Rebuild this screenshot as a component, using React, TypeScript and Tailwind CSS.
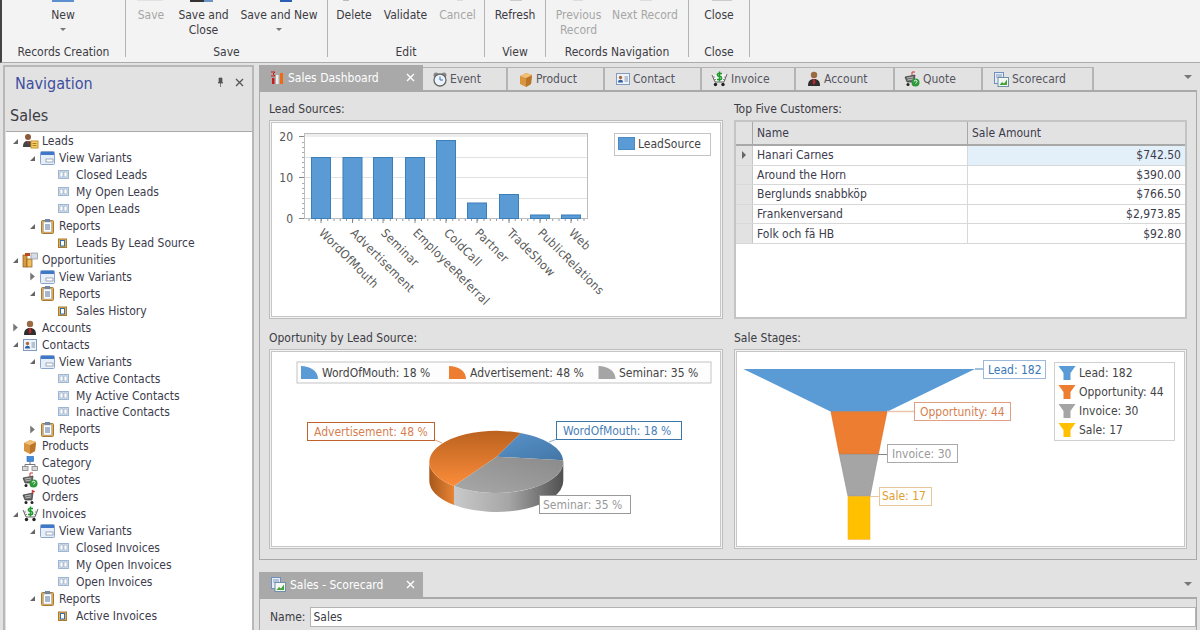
import type { ReactNode } from "react";

const FONT = "font-['DejaVu_Sans_Condensed','DejaVu_Sans',sans-serif]";

function Caret({ open }: { open: boolean }) {
  return (
    <svg width="7" height="9" viewBox="0 0 7 9" className="shrink-0">
      {open ? <path d="M6 2v5H1z" fill="#666" /> : <path d="M1.5 1l4 3.5-4 3.5z" fill="#777" stroke="#777" strokeWidth=".5" />}
    </svg>
  );
}

function LeadIcon() {
  return (
    <svg width="17" height="16" viewBox="0 0 17 16">
      <circle cx="6" cy="4" r="3" fill="#8a5a3a" />
      <path d="M1 14c0-5 2-6 5-6s5 1 5 6z" fill="#444" />
      <path d="M5 8h2l-1 4z" fill="#c33" />
      <rect x="9" y="8" width="7" height="7" fill="#f5cf6a" stroke="#c8922c" />
      <path d="M10.500 10.500h4M10.500 12.500h4" stroke="#b07a20" />
    </svg>
  );
}

function ViewIcon() {
  return (
    <svg width="15" height="14" viewBox="0 0 15 14">
      <rect x=".5" y=".5" width="14" height="13" rx="1" fill="#e8eef7" stroke="#8aa6cc" />
      <rect x="1" y="1" width="13" height="3" fill="#3f78c8" />
      <rect x="6" y="8" width="7" height="3" fill="#fff" stroke="#7b8ba3" strokeWidth=".7" />
    </svg>
  );
}

function VariantIcon() {
  return (
    <svg width="11" height="10" viewBox="0 0 11 10">
      <rect x=".5" y=".5" width="10" height="8" fill="#dbe6f3" stroke="#9db6d2" />
      <rect x="2" y="2" width="3" height="5" fill="#fff" stroke="#8aa0bb" strokeWidth=".6" />
      <rect x="6" y="2" width="3" height="5" fill="#fff" stroke="#8aa0bb" strokeWidth=".6" />
    </svg>
  );
}

function ReportIcon() {
  return (
    <svg width="13" height="15" viewBox="0 0 13 15">
      <rect x=".5" y="1.500" width="12" height="13" rx="1" fill="#e0aa55" stroke="#a87a30" />
      <rect x="2.500" y="3" width="8" height="10" fill="#fff" stroke="#8aa0bb" strokeWidth=".5" />
      <rect x="4" y="0" width="5" height="3" fill="#6b87ad" />
      <path d="M4 6h5M4 8h5M4 10h5" stroke="#4f6f9c" />
    </svg>
  );
}

function ReportItemIcon() {
  return (
    <svg width="9" height="10" viewBox="0 0 9 10">
      <rect x=".5" y="1" width="8" height="8.500" fill="#e6b04e" stroke="#a97c2e" />
      <rect x="2.500" y="2.500" width="4" height="5.500" fill="#fff" stroke="#2f6fb8" />
    </svg>
  );
}

function OppIcon() {
  return (
    <svg width="16" height="16" viewBox="0 0 16 16">
      <rect x="1" y="3" width="4" height="12" fill="#d89a3c" stroke="#8a5a1a" strokeWidth=".7" />
      <rect x="5" y="7" width="5" height="8" fill="#efbe5c" stroke="#8a5a1a" strokeWidth=".7" />
      <rect x="9" y="1" width="6.500" height="6" fill="#d6dce6" stroke="#8a8f99" strokeWidth=".7" />
      <rect x="3" y="1" width="5" height="3" fill="#bb4a20" />
    </svg>
  );
}

function AccountIcon() {
  return (
    <svg width="14" height="16" viewBox="0 0 14 16">
      <circle cx="7" cy="4" r="3.200" fill="#9a6a44" />
      <path d="M1 15c0-5 2-7 6-7s6 2 6 7z" fill="#2e2e2e" />
      <path d="M6 8h2l.5 4-1.500 2-1.500-2z" fill="#b52a2a" />
    </svg>
  );
}

function ContactIcon() {
  return (
    <svg width="14" height="12" viewBox="0 0 14 12">
      <rect x=".5" y=".5" width="13" height="11" fill="#eef3fa" stroke="#7f9bc2" />
      <circle cx="4.500" cy="4.500" r="1.700" fill="#a86a3c" />
      <path d="M2 9.500c0-2 1-2.700 2.500-2.700S7 7.500 7 9.500z" fill="#2f5f9f" />
      <path d="M8.500 4h3.500M8.500 6h3.500M8.500 8h3.500" stroke="#7f8fa8" />
    </svg>
  );
}

function ProductIcon() {
  return (
    <svg width="14" height="15" viewBox="0 0 14 15">
      <path d="M1 4l6-3 6 2-1 9-5 3-6-3z" fill="#d8953f" />
      <path d="M7 6l6-3-1 9-5 3z" fill="#b9762a" />
      <path d="M1 4l6-3 6 2-6 3z" fill="#f0c07a" />
    </svg>
  );
}

function CategoryIcon() {
  return (
    <svg width="16" height="15" viewBox="0 0 16 15">
      <rect x="5" y=".5" width="6.500" height="5" fill="#3f8ce0" stroke="#2a5fa5" strokeWidth=".6" />
      <path d="M8 5.500v3M3 11V8.500h10V11" stroke="#777" fill="none" />
      <rect x=".5" y="10.500" width="5.500" height="4" fill="#d8d8d8" stroke="#777" strokeWidth=".7" />
      <rect x="10" y="10.500" width="5.500" height="4" fill="#d8d8d8" stroke="#777" strokeWidth=".7" />
    </svg>
  );
}

function CartIcon({ badge }: { badge: "quote" | "order" | "invoice" }) {
  if (badge === "invoice") {
    return (
      <svg width="17" height="16" viewBox="0 0 17 16">
        <path d="M1 4l3 7h9l3-8" fill="#f4f4f4" stroke="#444" strokeWidth=".8" />
        <path d="M2 6h2M13 6h2M3 8.500h2M12 8.500h2" stroke="#666" strokeWidth=".7" />
        <path d="M6 8.500h3.500c1.500 0 1.500-2.700 0-2.900l-2-.3c-1.500-.2-1.500-2.800 0-2.800H11M8.500 .5v10" stroke="#1c9a2c" fill="none" strokeWidth="1.500" />
        <circle cx="4.500" cy="13.500" r="1.700" fill="#222" />
        <circle cx="12" cy="13.500" r="1.700" fill="#222" />
      </svg>
    );
  }
  return (
    <svg width="16" height="16" viewBox="0 0 16 16">
      <path d="M1 6l10-2-1 7H3z" fill="#6a6a6a" stroke="#333" strokeWidth=".7" />
      <path d="M3 7l6-1M3.500 9l5.500-1" stroke="#ddd" strokeWidth=".7" />
      <circle cx="4" cy="13.500" r="1.500" fill="#222" />
      <circle cx="10" cy="13.500" r="1.500" fill="#222" />
      {badge === "quote" && (
        <>
          <path d="M8 4V1h3" stroke="#c33" fill="none" />
          <circle cx="11.500" cy="11.500" r="4" fill="#2c9a3a" />
          <path d="M10.200 10.500c0-1.700 2.800-1.700 2.800 0 0 1-1.400 1-1.400 2" stroke="#fff" fill="none" />
        </>
      )}
      {badge === "order" && <path d="M10 5V1l3 1.500-3 1.500" fill="#c33" stroke="#c33" strokeWidth=".5" />}
    </svg>
  );
}

function DashIcon({ light }: { light?: boolean }) {
  return (
    <svg width="13" height="14" viewBox="0 0 13 14">
      <path d="M0 1h4L2 3l2 2H0" fill="none" stroke="#d01818" strokeWidth="1" />
      <rect x="1" y="7" width="2.500" height="6" fill="#c81c1c" />
      <rect x="5" y="4" width="2.500" height="9" fill={light ? "#eee" : "#333"} />
      <rect x="9" y="2" width="3" height="11" fill="#f06a10" />
    </svg>
  );
}

function ClockIcon() {
  return (
    <svg width="14" height="15" viewBox="0 0 14 15">
      <circle cx="3" cy="3" r="2.500" fill="#888" />
      <circle cx="11" cy="3" r="2.500" fill="#888" />
      <circle cx="7" cy="8" r="6" fill="#eef4fb" stroke="#666" strokeWidth="1.300" />
      <path d="M7 4.500V8h3" stroke="#2f6fb8" fill="none" />
    </svg>
  );
}

function ScoreIcon() {
  return (
    <svg width="15" height="15" viewBox="0 0 15 15">
      <rect x=".5" y=".5" width="9" height="11" fill="#e6edf7" stroke="#6f8fc0" />
      <path d="M2 3h6M2 5h6" stroke="#7f9bc2" />
      <rect x="4" y="5.500" width="10.500" height="9" fill="#f4f8f2" stroke="#6f8fa8" />
      <path d="M5.500 13l2.500-3 2 1.500 3-4v5.500z" fill="#45a23a" />
    </svg>
  );
}

type TreeRow = { level: number; text: string; caret?: "open" | "closed"; icon: ReactNode };

const view = { icon: <ViewIcon />, text: "View Variants" };
const reports = { icon: <ReportIcon />, text: "Reports" };

const tree: TreeRow[] = [
  { level: 0, text: "Leads", caret: "open", icon: <LeadIcon /> },
  { level: 1, caret: "open", ...view },
  { level: 2, text: "Closed Leads", icon: <VariantIcon /> },
  { level: 2, text: "My Open Leads", icon: <VariantIcon /> },
  { level: 2, text: "Open Leads", icon: <VariantIcon /> },
  { level: 1, caret: "open", ...reports },
  { level: 2, text: "Leads By Lead Source", icon: <ReportItemIcon /> },
  { level: 0, text: "Opportunities", caret: "open", icon: <OppIcon /> },
  { level: 1, caret: "closed", ...view },
  { level: 1, caret: "open", ...reports },
  { level: 2, text: "Sales History", icon: <ReportItemIcon /> },
  { level: 0, text: "Accounts", caret: "closed", icon: <AccountIcon /> },
  { level: 0, text: "Contacts", caret: "open", icon: <ContactIcon /> },
  { level: 1, caret: "open", ...view },
  { level: 2, text: "Active Contacts", icon: <VariantIcon /> },
  { level: 2, text: "My Active Contacts", icon: <VariantIcon /> },
  { level: 2, text: "Inactive Contacts", icon: <VariantIcon /> },
  { level: 1, caret: "closed", ...reports },
  { level: 0, text: "Products", icon: <ProductIcon /> },
  { level: 0, text: "Category", icon: <CategoryIcon /> },
  { level: 0, text: "Quotes", icon: <CartIcon badge="quote" /> },
  { level: 0, text: "Orders", icon: <CartIcon badge="order" /> },
  { level: 0, text: "Invoices", caret: "open", icon: <CartIcon badge="invoice" /> },
  { level: 1, caret: "open", ...view },
  { level: 2, text: "Closed Invoices", icon: <VariantIcon /> },
  { level: 2, text: "My Open Invoices", icon: <VariantIcon /> },
  { level: 2, text: "Open Invoices", icon: <VariantIcon /> },
  { level: 1, caret: "open", ...reports },
  { level: 2, text: "Active Invoices", icon: <ReportItemIcon /> },
];

function Row({ row }: { row: TreeRow }) {
  if (row.level === 2) {
    return (
      <div className="flex h-[16.95px] items-center pl-[52px]">
        <span className="flex w-[18px] shrink-0 items-center">{row.icon}</span>
        <span>{row.text}</span>
      </div>
    );
  }
  return (
    <div className={`flex h-[16.95px] items-center ${row.level === 1 ? "pl-[23px]" : "pl-[6px]"}`}>
      <span className="flex w-[9px] shrink-0 items-center">
        {row.caret && <Caret open={row.caret === "open"} />}
      </span>
      <span className="flex w-[19px] shrink-0 items-center justify-center pr-[1px]">{row.icon}</span>
      <span className="pl-[2px]">{row.text}</span>
    </div>
  );
}

function RibbonBtn({ w, lines, off, drop, bar }: { w: string; lines: string[]; off?: boolean; drop?: boolean; bar?: ReactNode }) {
  return (
    <div className={`relative flex shrink-0 flex-col items-center pt-[8px] leading-[15px] ${w} ${off ? "text-[#a6a6a6]" : "text-[#3c3c44]"}`}>
      {bar}
      {lines.map((l) => (
        <span key={l} className="whitespace-nowrap">{l}</span>
      ))}
      {drop && <span className="mt-[5px] h-0 w-0 border-x-[3px] border-t-[3px] border-x-transparent border-t-[#777]" />}
    </div>
  );
}

function Group({ w, label, children }: { w: string; label: string; children: ReactNode }) {
  return (
    <div className={`relative flex h-[57px] shrink-0 flex-col border-r border-[#b4b4b4] ${w}`}>
      <div className="flex h-[44px] shrink-0">{children}</div>
      <div className="shrink-0 text-center leading-[16px] text-[#3c3c44]">{label}</div>
    </div>
  );
}

// bottom edge of the ribbon icons that the crop cuts off
function Bit({ cls }: { cls: string }) {
  return <span className={`absolute top-0 ${cls}`} />;
}

function Ribbon() {
  return (
    <div className="flex h-[63px] shrink-0 border-b border-[#ababab] border-l-2 border-l-[#444] bg-[#f3f3f3]">
      <Group w="w-[124px]" label="Records Creation">
        <RibbonBtn w="w-[122px]" lines={["New"]} drop bar={<Bit cls="left-[50px] h-[2px] w-[22px] bg-[#5b8fd0]" />} />
      </Group>
      <Group w="w-[202px]" label="Save">
        <RibbonBtn w="w-[50px]" lines={["Save"]} off bar={<Bit cls="left-[11px] h-[1px] w-[26px] bg-[#e2e2e2]" />} />
        <RibbonBtn
          w="w-[55px]"
          lines={["Save and", "Close"]}
          bar={
            <>
              <Bit cls="left-[14px] h-[2px] w-[14px] bg-[#333]" />
              <Bit cls="left-[28px] h-[2px] w-[9px] bg-[#6a93c8]" />
            </>
          }
        />
        <RibbonBtn w="w-[96px]" lines={["Save and New"]} drop bar={<Bit cls="left-[49px] h-[2px] w-[12px] bg-[#2a5fb5]" />} />
      </Group>
      <Group w="w-[157px]" label="Edit">
        <RibbonBtn w="w-[52px]" lines={["Delete"]} bar={<Bit cls="left-[15px] h-[1px] w-[6px] bg-[#bbb]" />} />
        <RibbonBtn w="w-[51px]" lines={["Validate"]} />
        <RibbonBtn w="w-[53px]" lines={["Cancel"]} off bar={<Bit cls="left-[26px] h-[1px] w-[6px] bg-[#ddd]" />} />
      </Group>
      <Group w="w-[61px]" label="View">
        <RibbonBtn w="w-[60px]" lines={["Refresh"]} bar={<Bit cls="left-[25px] h-[1px] w-[12px] bg-[#ccc]" />} />
      </Group>
      <Group w="w-[143px]" label="Records Navigation">
        <RibbonBtn w="w-[65px]" lines={["Previous", "Record"]} off bar={<Bit cls="left-[27px] h-[1px] w-[10px] bg-[#ddd]" />} />
        <RibbonBtn w="w-[68px]" lines={["Next Record"]} off bar={<Bit cls="left-[29px] h-[1px] w-[12px] bg-[#ddd]" />} />
      </Group>
      <Group w="w-[61px]" label="Close">
        <RibbonBtn w="w-[60px]" lines={["Close"]} bar={<Bit cls="left-[23px] h-[1px] w-[20px] bg-[#ccc]" />} />
      </Group>
    </div>
  );
}

function Nav() {
  return (
    <div className="flex w-[251px] shrink-0 flex-col border-2 border-b-0 border-[#b8b8b8] bg-[#e2e2e2]">
      <div className="flex h-[32px] items-center justify-between pl-[10px] pr-[8px] pt-[2px]">
        <span className="text-[16px] text-[#3d4fa0]">Navigation</span>
        <span className="mb-[4px] flex items-center gap-[10px]">
          <svg width="9" height="10" viewBox="0 0 9 10">
            <path d="M3 1h3v4l1 1H2l1-1zM4.500 6v4" fill="#555" stroke="#555" strokeWidth=".7" />
          </svg>
          <svg width="9" height="9" viewBox="0 0 9 9">
            <path d="M1 1l7 7M8 1l-7 7" stroke="#555" strokeWidth="1.300" />
          </svg>
        </span>
      </div>
      <div className="flex h-[32px] items-center pl-[5px] pt-[2px] text-[16px] text-[#3c3c44]">Sales</div>
      <div className="ml-px flex-1 border-t border-[#a9a9a9] bg-white pt-px text-[#3c3c4c]">
        {tree.map((r, i) => (
          <Row key={i} row={r} />
        ))}
      </div>
    </div>
  );
}

const tabs = [
  { w: "w-[85px] pl-[10px]", text: "Event", icon: <ClockIcon /> },
  { w: "w-[97px] pl-[11px]", text: "Product", icon: <ProductIcon /> },
  { w: "w-[97px] pl-[11px]", text: "Contact", icon: <ContactIcon /> },
  { w: "w-[94px] pl-[9px]", text: "Invoice", icon: <CartIcon badge="invoice" /> },
  { w: "w-[99px] pl-[11px]", text: "Account", icon: <AccountIcon /> },
  { w: "w-[88px] pl-[9px]", text: "Quote", icon: <CartIcon badge="quote" /> },
  { w: "w-[111px] pl-[11px]", text: "Scorecard", icon: <ScoreIcon /> },
];

function ActiveTab({ icon, text }: { icon: ReactNode; text: string }) {
  return (
    <div className="flex h-[25px] w-[164px] shrink-0 items-center gap-[4px] bg-[#a9a9a9] pl-[12px] pr-[8px] text-white">
      {icon}
      <span className="flex-1">{text}</span>
      <svg width="9" height="9" viewBox="0 0 9 9">
        <path d="M1 1l7 7M8 1l-7 7" stroke="#fff" strokeWidth="1.400" />
      </svg>
    </div>
  );
}

function Chevron() {
  return <span className="absolute right-[5px] top-[10px] h-0 w-0 border-x-[4px] border-t-[4px] border-x-transparent border-t-[#777]" />;
}

function Panel({ children }: { children: ReactNode }) {
  return (
    <div className="h-full border border-[#bdbdbd] bg-[#f4f4f4] p-px">
      <div className="h-full border border-[#c6c6c6] bg-white">{children}</div>
    </div>
  );
}

function Cell({ label, children }: { label: string; children: ReactNode }) {
  return (
    <div className="flex flex-col">
      <div className="flex h-[22px] items-center text-[#3c3c44]">{label}</div>
      {children}
    </div>
  );
}

const bars = [
  { x: 311, top: 157, name: "WordOfMouth" },
  { x: 342.5, top: 157, name: "Advertisement" },
  { x: 373, top: 157, name: "Seminar" },
  { x: 405, top: 157, name: "EmployeeReferral" },
  { x: 436, top: 140, name: "ColdCall" },
  { x: 467, top: 202.5, name: "Partner" },
  { x: 499, top: 194, name: "TradeShow" },
  { x: 530, top: 214.5, name: "PublicRelations" },
  { x: 561, top: 214.5, name: "Web" },
];

function BarChart() {
  const minor: number[] = [];
  for (let x = 309; x < 588; x += 6.25) minor.push(x);
  return (
    <svg width="448" height="193" viewBox="272 123 448 193" className="block" fontSize="12">
      <rect x="304.500" y="133.500" width="283" height="85" fill="#fff" stroke="#bdbdbd" />
      <rect x="305" y="134" width="282" height="3" fill="#eee" />
      {[157.5, 177.5, 198.5].map((y) => (
        <line key={y} x1="305" x2="587" y1={y} y2={y} stroke="#e2e2e2" />
      ))}
      {[136.5, 177.5, 218.5].map((y) => (
        <line key={y} x1="299" x2="304" y1={y} y2={y} stroke="#888" />
      ))}
      {[142, 147, 152, 157, 162, 167, 172, 183, 188, 193, 198, 203, 208, 213].map((y) => (
        <line key={y} x1="302" x2="304" y1={y + 0.5} y2={y + 0.5} stroke="#aaa" />
      ))}
      {minor.map((x) => (
        <line key={x} x1={x} x2={x} y1="219" y2="221" stroke="#999" />
      ))}
      {bars.map((b) => (
        <g key={b.name}>
          <rect x={b.x + 0.5} y={b.top + 0.5} width="19" height={218 - b.top} fill="#5b9bd5" stroke="#3b7fb9" />
          <line x1={b.x + 10} x2={b.x + 10} y1="219" y2="223" stroke="#888" />
          <text x={b.x + 13} y="236" letterSpacing=".4" transform={`rotate(45 ${b.x + 13} 228)`} fill="#5a5a5a">{b.name}</text>
        </g>
      ))}
      <text x="293" y="141" textAnchor="end" fill="#555">20</text>
      <text x="293" y="182" textAnchor="end" fill="#555">10</text>
      <text x="293" y="223" textAnchor="end" fill="#555">0</text>
      <rect x="614.500" y="133.500" width="96" height="22" fill="#fff" stroke="#c4c4c4" />
      <rect x="618.500" y="137.500" width="16" height="12" fill="#5b9bd5" stroke="#4a8ac5" />
      <text x="638" y="148" fill="#444">LeadSource</text>
    </svg>
  );
}

function Quarter({ x, y, fill }: { x: number; y: number; fill: string }) {
  return <path d={`M${x} ${y}h17c0-8-8-13-17-13z`} fill={fill} />;
}

function PieChart() {
  return (
    <svg width="448" height="194" viewBox="272 352 448 194" className="block" fontSize="12">
      <defs>
        <linearGradient id="orangeTop" x1="0" y1="0" x2="0" y2="1">
          <stop offset="0" stopColor="#bb621f" />
          <stop offset="1" stopColor="#fb8c3a" />
        </linearGradient>
        <linearGradient id="blueTop" x1="0" y1="0" x2="1" y2="1">
          <stop offset="0" stopColor="#5a94cc" />
          <stop offset="1" stopColor="#4276a6" />
        </linearGradient>
        <linearGradient id="grayTop" x1="0" y1="1" x2="1" y2="0">
          <stop offset="0" stopColor="#a8a8a8" />
          <stop offset="1" stopColor="#8a8a8a" />
        </linearGradient>
        <linearGradient id="graySide" x1="0" y1="0" x2="1" y2="0">
          <stop offset="0" stopColor="#c9c9c9" />
          <stop offset=".5" stopColor="#a6a6a6" />
          <stop offset="1" stopColor="#505050" />
        </linearGradient>
        <linearGradient id="orangeSide" x1="0" y1="0" x2="1" y2="0">
          <stop offset="0" stopColor="#a8581c" />
          <stop offset="1" stopColor="#e88434" />
        </linearGradient>
      </defs>
      <rect x="297" y="362" width="414" height="21" fill="#fdfdfd" stroke="#c4c4c4" />
      <Quarter x={301} y={379} fill="#5b9bd5" />
      <text x="322" y="377" fill="#444">WordOfMouth: 18 %</text>
      <Quarter x={449} y={379} fill="#ed7d31" />
      <text x="470" y="377" fill="#444">Advertisement: 48 %</text>
      <Quarter x={598.5} y={379} fill="#a5a5a5" />
      <text x="619" y="377" fill="#444">Seminar: 35 %</text>

      <path d="M429.300 462A67 31 0 0 0 454 486v19A67 31 0 0 1 429.300 481z" fill="url(#orangeSide)" />
      <path d="M454 486A67 31 0 0 0 563.300 462v19A67 31 0 0 1 454 505z" fill="url(#graySide)" />
      <path d="M496.700 456.700L520.700 433A67 31 0 0 1 563.200 460.300z" fill="url(#blueTop)" />
      <path d="M496.700 456.700L520.700 433A67 31 0 0 0 429.300 462 67 31 0 0 0 454 486z" fill="url(#orangeTop)" />
      <path d="M496.700 456.700L563.200 460.300A67 31 0 0 1 454 486z" fill="url(#grayTop)" />

      <path d="M435 440l7 3" stroke="#e0a584" />
      <rect x="307.500" y="422.500" width="127" height="18" fill="#fff" stroke="#c0622a" />
      <text x="314" y="436" fill="#d57f52">Advertisement: 48 %</text>
      <path d="M557 439l-8 3" stroke="#8ab0d0" />
      <rect x="556.500" y="421.500" width="125" height="18" fill="#fff" stroke="#3a76aa" />
      <text x="563" y="435" fill="#4a80b8">WordOfMouth: 18 %</text>
      <path d="M539 495l-6-6" stroke="#777" />
      <rect x="539.500" y="495.500" width="91" height="18" fill="#fff" stroke="#999" />
      <text x="543" y="509" fill="#999">Seminar: 35 %</text>
    </svg>
  );
}

function FunnelGlyph({ y, fill }: { y: number; fill: string }) {
  return <path d={`M1058.500 ${y - 6}h17l-5 7v7h-7v-7z`} fill={fill} />;
}

function Funnel() {
  return (
    <svg width="447" height="194" viewBox="737 352 447 194" className="block" fontSize="12">
      <path d="M743.300 369H975L887 411.700H831z" fill="#5b9bd5" />
      <path d="M831 411.700h56l-8.700 42.600h-39z" fill="#ed7d31" stroke="#d86a20" strokeWidth=".6" />
      <path d="M839.300 454.300h39L870 496.300h-22z" fill="#a5a5a5" stroke="#8c8c8c" strokeWidth=".6" />
      <rect x="848" y="496.300" width="22" height="43" fill="#ffc000" stroke="#f0b030" strokeWidth=".6" />

      <path d="M975 369h9" stroke="#4a80b5" />
      <rect x="983.500" y="360.500" width="62" height="18" fill="#fff" stroke="#9db8d8" />
      <text x="988" y="374" fill="#3a78b8">Lead: 182</text>
      <path d="M887 411.500h27" stroke="#ebc4ad" strokeWidth="1.500" />
      <rect x="914.500" y="402.500" width="96" height="18" fill="#fff" stroke="#e0a080" />
      <text x="920" y="416" fill="#d57f52">Opportunity: 44</text>
      <path d="M878 454.500h9" stroke="#888" />
      <rect x="887.500" y="444.500" width="70" height="18" fill="#fff" stroke="#aaa" />
      <text x="892" y="458" fill="#999">Invoice: 30</text>
      <path d="M870 496.500h9" stroke="#e8c79a" />
      <rect x="879.500" y="487.500" width="52" height="18" fill="#fff" stroke="#e8c79a" />
      <text x="882" y="500" fill="#e0a030">Sale: 17</text>

      <rect x="1054.500" y="362.500" width="120" height="78" fill="#fff" stroke="#d0d0d0" />
      <FunnelGlyph y={372} fill="#5b9bd5" />
      <text x="1079" y="377" fill="#444">Lead: 182</text>
      <FunnelGlyph y={391} fill="#ed7d31" />
      <text x="1079" y="396" fill="#444">Opportunity: 44</text>
      <FunnelGlyph y={410} fill="#a5a5a5" />
      <text x="1079" y="415" fill="#444">Invoice: 30</text>
      <FunnelGlyph y={429} fill="#ffc000" />
      <text x="1079" y="434" fill="#444">Sale: 17</text>
    </svg>
  );
}

const customers = [
  ["Hanari Carnes", "$742.50"],
  ["Around the Horn", "$390.00"],
  ["Berglunds snabbköp", "$766.50"],
  ["Frankenversand", "$2,973.85"],
  ["Folk och fä HB", "$92.80"],
];

function Customers() {
  return (
    <div className="h-full border-2 border-[#c4c4c4] bg-white text-[#3c3c4c]">
      <div className="flex h-[24px] border-b-2 border-[#a8a8a8] bg-[#e2e2e2]">
        <div className="w-[17px] shrink-0 border-r border-[#a8a8a8]" />
        <div className="flex w-[215px] shrink-0 items-center border-r border-[#a8a8a8] pl-[4px]">Name</div>
        <div className="flex flex-1 items-center pl-[4px]">Sale Amount</div>
      </div>
      {customers.map(([name, amount], i) => (
        <div key={name} className="flex h-[19.6px] border-b border-[#d8d8d8]">
          <div className="flex w-[17px] shrink-0 items-center justify-center border-r border-[#c8c8c8] bg-[#e2e2e2]">
            {i === 0 && <span className="h-0 w-0 border-y-[4px] border-l-[4px] border-y-transparent border-l-[#666]" />}
          </div>
          <div className="flex w-[215px] shrink-0 items-center border-r border-[#d8d8d8] pl-[4px]">{name}</div>
          <div className={`flex flex-1 items-center justify-end pr-[4px] ${i === 0 ? "bg-[#e3f0fa]" : ""}`}>{amount}</div>
        </div>
      ))}
    </div>
  );
}

export default function App() {
  return (
    <div className={`flex h-[630px] w-[1200px] flex-col overflow-hidden bg-[#e2e2e2] text-[12px] ${FONT}`}>
      <Ribbon />
      <div className="flex min-h-0 flex-1 pl-[3px] pt-[2px]">
        <Nav />
        <div className="ml-[5px] flex w-[938px] shrink-0 flex-col">
          <div className="relative flex h-[25px] shrink-0 items-end">
            <ActiveTab icon={<DashIcon light />} text="Sales Dashboard" />
            {tabs.map((t) => (
              <div key={t.text} className={`flex h-[23px] shrink-0 items-center gap-[3px] border-r-2 border-t border-[#b4b4b4] text-[#55555f] ${t.w}`}>
                {t.icon}
                <span>{t.text}</span>
              </div>
            ))}
            <Chevron />
          </div>
          <div className="h-[470px] shrink-0 border-x border-b border-t-2 border-[#a9a9a9] px-[9px] pt-[6px]">
            <div className="grid grid-cols-[454px_453px] grid-rows-[221px_222px] gap-x-[11px] gap-y-[8px]">
              <Cell label="Lead Sources:">
                <div className="h-[199px]"><Panel><BarChart /></Panel></div>
              </Cell>
              <Cell label="Top Five Customers:">
                <div className="h-[199px]"><Customers /></div>
              </Cell>
              <Cell label="Oportunity by Lead Source:">
                <div className="h-[200px]"><Panel><PieChart /></Panel></div>
              </Cell>
              <Cell label="Sale Stages:">
                <div className="h-[200px]"><Panel><Funnel /></Panel></div>
              </Cell>
            </div>
          </div>
          <div className="relative mt-[12px] flex h-[25px] shrink-0">
            <ActiveTab icon={<ScoreIcon />} text="Sales - Scorecard" />
            <Chevron />
          </div>
          <div className="flex-1 border-x border-t-2 border-[#a9a9a9] pl-[10px] pt-[8px]">
            <div className="flex items-center gap-[4px]">
              <span className="text-[#3c3c44]">Name:</span>
              <div className="flex h-[20px] flex-1 items-center border border-[#b4b4b4] bg-white pl-[3px] text-[#3c3c44]">Sales</div>
            </div>
          </div>
        </div>
      </div>
    </div>
  );
}
